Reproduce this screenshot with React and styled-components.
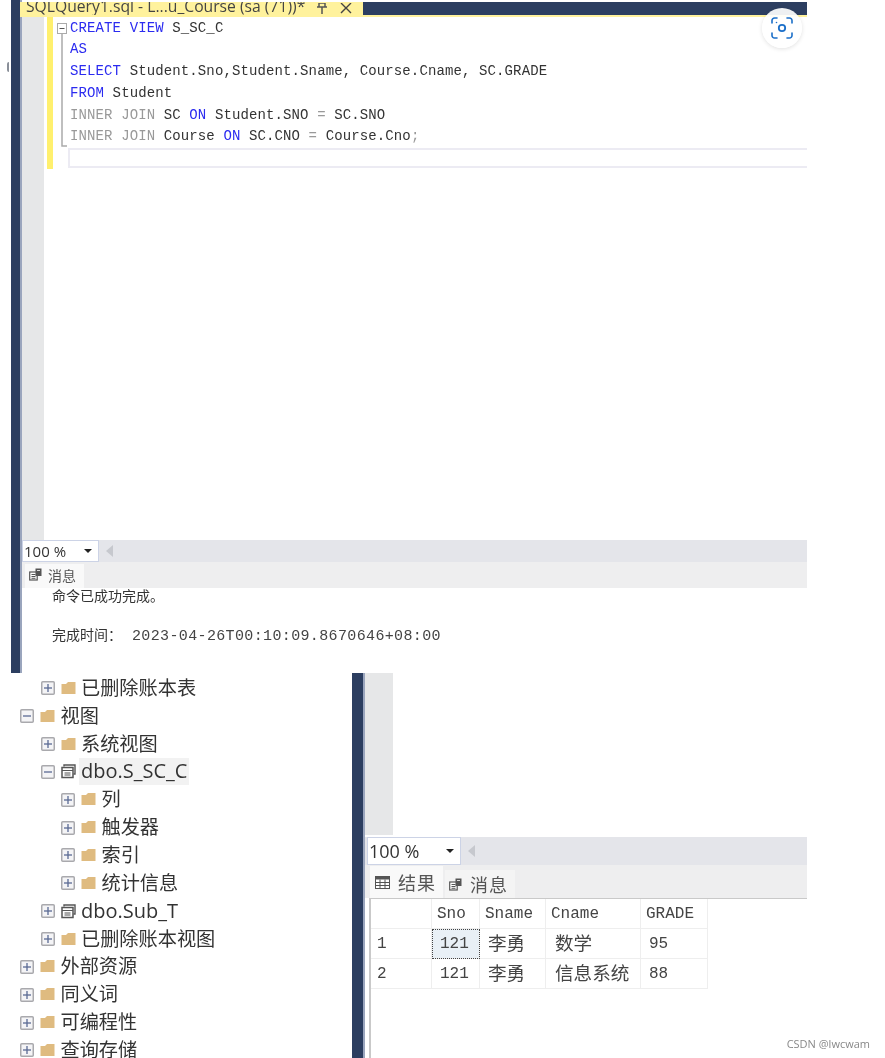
import styled, { createGlobalStyle } from 'styled-components';

const GlobalStyle = createGlobalStyle`
  html, body {
    margin: 0;
    padding: 0;
    background: #fff;
  }
`;

const CJK = '"Noto Sans CJK SC", sans-serif';
const MONO = '"Liberation Mono", "Noto Sans CJK SC", monospace';
const RAIL = '#2c3e60';

const Page = styled.div`
  position: relative;
  width: 885px;
  height: 1058px;
  overflow: hidden;
  background: #fff;
  font-family: ${CJK};
  color: #333;
  filter: blur(0.35px);
`;

const EditorWindow = styled.section`
  display: flex;
  width: 797px;
  height: 673px;
  margin-left: 10px;
`;

const Rail = styled.div`
  flex: none;
  width: ${(p) => p.$width}px;
  margin-left: ${(p) => p.$left}px;
  background: ${RAIL};
  border-right: 2px solid #9aa5bd;
`;

const Main = styled.div`
  flex: 1;
  min-width: 0;
  display: flex;
  flex-direction: column;
`;

const TitleStrip = styled.div`
  display: flex;
  height: 13px;
  margin: 2px 0 0 -2px;
  background: ${RAIL};
`;

const DocTab = styled.div`
  display: flex;
  align-items: flex-end;
  width: 343px;
  padding-left: 6px;
  box-sizing: border-box;
  overflow: hidden;
  background: #fff29d;
`;

const DocTitle = styled.span`
  font: 15.7px/20px "Open Sans", sans-serif;
  color: #444;
  white-space: nowrap;
  width: 288px;
  margin-bottom: -1px;
`;

const TabGlyph = styled.svg`
  flex: none;
  margin-left: ${(p) => p.$left}px;
  margin-bottom: 1px;
`;

const YellowRule = styled.div`
  height: 2px;
  margin-left: -2px;
  background: #fff29d;
`;

const CodeArea = styled.div`
  display: flex;
  height: 523px;
`;

const Gutter = styled.div`
  flex: none;
  width: 22px;
  background: #e6e7e8;
`;

const ChangeBar = styled.div`
  flex: none;
  width: 6px;
  height: 152px;
  margin-left: 3px;
  background: #fff06e;
`;

const FoldGlyph = styled.svg`
  flex: none;
  margin: 6px 0 0 4px;
`;

const CodeColumn = styled.div`
  flex: 1;
  min-width: 0;
  padding-top: 0.5px;
`;

const CodeLine = styled.div`
  height: 21.8px;
  padding-left: 2px;
  font: 14px/21.8px ${MONO};
  letter-spacing: 0.12px;
  white-space: pre;
  color: #333;
`;

const Keyword = styled.span`
  color: ${(p) => (p.$muted ? '#999' : '#2b2bf0')};
`;

const CurrentLine = styled.div`
  height: 16px;
  border: 2px solid #ecebf3;
  border-right: none;
`;

const ZoomBar = styled.div`
  flex: none;
  display: flex;
  align-items: center;
  height: ${(p) => p.$height}px;
  padding-left: ${(p) => p.$inset}px;
  background: #e4e5ea;
`;

const ZoomSelect = styled.div`
  display: flex;
  align-items: center;
  justify-content: space-between;
  box-sizing: border-box;
  width: ${(p) => p.$width}px;
  height: 100%;
  padding: 0 6px 0 1px;
  background: #fff;
  border: 1px solid #ccd3e6;
  font: ${(p) => p.$size}px "Open Sans", sans-serif;
  color: #333;
`;

const Caret = styled.span`
  width: 0;
  height: 0;
  border-left: 4px solid transparent;
  border-right: 4px solid transparent;
  border-top: 4px solid #222;
`;

const ScrollArrow = styled.span`
  width: 0;
  height: 0;
  margin-left: 7px;
  border-top: 6px solid transparent;
  border-bottom: 6px solid transparent;
  border-right: 7px solid #c6c8ce;
`;

const TabStrip = styled.div`
  flex: none;
  display: flex;
  align-items: flex-end;
  gap: 2px;
  height: ${(p) => p.$height}px;
  padding-left: ${(p) => p.$inset}px;
  background: #eeeeef;
`;

const ResultTab = styled.div`
  display: flex;
  align-items: center;
  gap: ${(p) => p.$gap}px;
  box-sizing: border-box;
  height: ${(p) => p.$height}px;
  padding-left: ${(p) => p.$pad}px;
  padding-bottom: ${(p) => p.$lift || 0}px;
  width: ${(p) => p.$width}px;
  background: ${(p) => (p.$active ? '#f9f9f9' : '#f4f4f4')};
  font: ${(p) => p.$size}px/1 ${CJK};
  letter-spacing: ${(p) => p.$spacing || 0}px;
  color: #555;
`;

const Output = styled.div`
  padding-left: 30px;
  font-size: 14px;
  color: #333;
`;

const OutputLine = styled.div`
  height: 19px;
  margin-bottom: ${(p) => p.$after || 0}px;
  line-height: 15px;
  white-space: pre;
`;

const Stamp = styled.span`
  margin-left: 10px;
  font: 15px ${MONO};
  letter-spacing: 0.36px;
  color: #444;
`;

const EdgeMark = styled.div`
  position: absolute;
  left: 7px;
  top: 62px;
  width: 2px;
  height: 10px;
  border-radius: 2px 0 0 2px;
  background: #8a8f99;
`;

const BottomRow = styled.section`
  display: flex;
  height: 385px;
`;

const TreePane = styled.div`
  flex: none;
  width: 351px;
  padding-top: 1.5px;
  box-sizing: border-box;
`;

const TreeRow = styled.div`
  display: flex;
  align-items: center;
  height: 27.85px;
  padding-left: ${(p) => 20 + p.$level * 20.5}px;
`;

const Expander = styled.svg`
  flex: none;
  margin-right: 6px;
`;

const NodeIcon = styled.svg`
  flex: none;
  margin-right: 3.5px;
`;

const NodeLabel = styled.span`
  padding: 0 2px;
  height: 27px;
  line-height: 26px;
  font-size: ${(p) => (p.$latin ? 20 : 19.2)}px;
  font-family: "Open Sans", ${CJK};
  white-space: nowrap;
  color: #333;
  background: ${(p) => (p.$selected ? '#f2f2f2' : 'transparent')};
`;

const ResultsPane = styled.div`
  flex: none;
  display: flex;
  width: 456px;
`;

const ResultsGutter = styled.div`
  flex: none;
  width: 28px;
  height: 162px;
  margin-bottom: 2px;
  background: #e6e7e8;
`;

const GridFrame = styled.div`
  flex: 1;
  margin-left: 4px;
  border-left: 2px solid #c9c9c9;
  border-top: 1px solid #c9c9c9;
`;

const ResultGrid = styled.div`
  display: grid;
  grid-template-columns: 61px 48px 66px 95px 67px;
  grid-template-rows: 30px 30px 30px;
  width: 337px;
`;

const Cell = styled.div`
  display: flex;
  align-items: center;
  box-sizing: border-box;
  padding-left: ${(p) => p.$pad ?? 8}px;
  padding-bottom: ${(p) => (p.$cjk ? 4 : 0)}px;
  border-right: 1px solid #eeeeee;
  border-bottom: 1px solid #eeeeee;
  font: ${(p) => (p.$cjk ? 18.6 : 16)}px ${MONO};
  color: #444;
  background: ${(p) => (p.$focus ? '#e9f0f6' : '#fff')};
  outline: ${(p) => (p.$focus ? '1px dotted #444' : 'none')};
  outline-offset: -1px;
`;

const HeaderCell = styled(Cell)`
  padding-left: 5px;
  background: #fff;
`;

const LensButton = styled.div`
  position: absolute;
  left: 762px;
  top: 8px;
  display: flex;
  align-items: center;
  justify-content: center;
  width: 40px;
  height: 40px;
  border-radius: 50%;
  background: rgba(255, 255, 255, 0.92);
  box-shadow: 0 1px 4px rgba(0, 0, 0, 0.12);
`;

const Watermark = styled.div`
  position: absolute;
  right: 15px;
  bottom: 7px;
  font: 11px "Open Sans", sans-serif;
  color: #888;
`;

const tree = [
  { level: 1, sign: 'plus', icon: 'folder', label: '已删除账本表' },
  { level: 0, sign: 'minus', icon: 'folder', label: '视图' },
  { level: 1, sign: 'plus', icon: 'folder', label: '系统视图' },
  { level: 1, sign: 'minus', icon: 'view', label: 'dbo.S_SC_C', selected: true },
  { level: 2, sign: 'plus', icon: 'folder', label: '列' },
  { level: 2, sign: 'plus', icon: 'folder', label: '触发器' },
  { level: 2, sign: 'plus', icon: 'folder', label: '索引' },
  { level: 2, sign: 'plus', icon: 'folder', label: '统计信息' },
  { level: 1, sign: 'plus', icon: 'view', label: 'dbo.Sub_T' },
  { level: 1, sign: 'plus', icon: 'folder', label: '已删除账本视图' },
  { level: 0, sign: 'plus', icon: 'folder', label: '外部资源' },
  { level: 0, sign: 'plus', icon: 'folder', label: '同义词' },
  { level: 0, sign: 'plus', icon: 'folder', label: '可编程性' },
  { level: 0, sign: 'plus', icon: 'folder', label: '查询存储' },
];

const rows = [
  ['1', '121', '李勇', '数学', '95'],
  ['2', '121', '李勇', '信息系统', '88'],
];

function ExpanderIcon({ sign }) {
  return (
    <Expander width="14" height="14" viewBox="0 0 14 14">
      <rect x="0.75" y="0.75" width="12.5" height="12.5" rx="1" fill="#f4f4f6" stroke="#a9a9ad" strokeWidth="1.5" />
      <path d="M3 7h8" stroke="#5a6a94" strokeWidth="1.3" />
      {sign === 'plus' && <path d="M7 3v8" stroke="#5a6a94" strokeWidth="1.3" />}
    </Expander>
  );
}

function TreeIcon({ kind }) {
  if (kind === 'view') {
    return (
      <NodeIcon width="15" height="15" viewBox="0 0 15 15">
        <path d="M3 2.500V1h11v9h-1.500" fill="none" stroke="#555" strokeWidth="1.4" />
        <rect x="1" y="3.500" width="11" height="10" fill="#fff" stroke="#555" strokeWidth="1.5" />
        <path d="M1 6.500h11M3.500 9h6M3.500 11h6" stroke="#555" strokeWidth="1.2" />
      </NodeIcon>
    );
  }
  return (
    <NodeIcon width="15" height="15" viewBox="0 0 15 15">
      <path d="M0.500 3 L5 3 L7 1 L14.500 1 L14.500 13 L0.500 13 Z" fill="#dfbb80" />
    </NodeIcon>
  );
}

function MessageIcon() {
  return (
    <svg width="13" height="13" viewBox="0 0 13 13">
      <rect x="0.7" y="4" width="7.5" height="8" fill="#fff" stroke="#555" strokeWidth="1.2" />
      <path d="M2.500 6.500h4M2.500 8.500h4M2.500 10.300h4" stroke="#555" />
      <rect x="6.500" y="0.500" width="6" height="7.500" fill="#555" />
      <path d="M8 2.500h3" stroke="#ddd" />
    </svg>
  );
}

function TableIcon() {
  return (
    <svg width="15" height="13" viewBox="0 0 15 13">
      <rect x="0.500" y="0.500" width="14" height="12" fill="#fff" stroke="#555" />
      <rect x="0.500" y="0.500" width="14" height="3" fill="#555" />
      <path d="M0.500 6.500h14M0.500 9.500h14M5 3.500v9M10 3.500v9" stroke="#555" />
    </svg>
  );
}

function App() {
  return (
    <Page>
      <GlobalStyle />
      <EdgeMark />
      <EditorWindow>
        <Rail $width={9} $left={1} />
        <Main>
          <TitleStrip>
            <DocTab>
              <DocTitle>SQLQuery1.sql - L...u_Course (sa (71))*</DocTitle>
              <TabGlyph $left={1} width="14" height="11" viewBox="0 0 14 11">
                <path d="M2 4h10M7 4v7M4 0h6v4H4z" fill="none" stroke="#555" strokeWidth="1.5" />
              </TabGlyph>
              <TabGlyph $left={11} width="12" height="11" viewBox="0 0 12 11">
                <path d="M1 0l10 10M11 0L1 10" fill="none" stroke="#444" strokeWidth="1.4" />
              </TabGlyph>
            </DocTab>
          </TitleStrip>
          <YellowRule />
          <CodeArea>
            <Gutter />
            <ChangeBar />
            <FoldGlyph width="11" height="125" viewBox="0 0 11 125">
              <rect x="0.500" y="0.500" width="9" height="10" fill="#fff" stroke="#aaa" />
              <path d="M2.500 5.500h5" stroke="#555" />
              <path d="M5 11v112h5" fill="none" stroke="#aaa" strokeWidth="1.5" />
            </FoldGlyph>
            <CodeColumn>
              <CodeLine><Keyword>CREATE VIEW</Keyword> S_SC_C</CodeLine>
              <CodeLine><Keyword>AS</Keyword></CodeLine>
              <CodeLine><Keyword>SELECT</Keyword> Student.Sno,Student.Sname, Course.Cname, SC.GRADE</CodeLine>
              <CodeLine><Keyword>FROM</Keyword> Student</CodeLine>
              <CodeLine><Keyword $muted>INNER JOIN</Keyword> SC <Keyword>ON</Keyword> Student.SNO <Keyword $muted>=</Keyword> SC.SNO</CodeLine>
              <CodeLine><Keyword $muted>INNER JOIN</Keyword> Course <Keyword>ON</Keyword> SC.CNO <Keyword $muted>=</Keyword> Course.Cno<Keyword $muted>;</Keyword></CodeLine>
              <CurrentLine />
            </CodeColumn>
          </CodeArea>
          <ZoomBar $height={22} $inset={0}>
            <ZoomSelect $width={77} $size={15}>100 %<Caret /></ZoomSelect>
            <ScrollArrow />
          </ZoomBar>
          <TabStrip $height={26} $inset={3}>
            <ResultTab $active $width={59} $height={24} $pad={4} $gap={6} $size={14} $lift={3}>
              <MessageIcon />消息
            </ResultTab>
          </TabStrip>
          <Output>
            <OutputLine $after={20}>命令已成功完成。</OutputLine>
            <OutputLine>完成时间：<Stamp>2023-04-26T00:10:09.8670646+08:00</Stamp></OutputLine>
          </Output>
        </Main>
      </EditorWindow>
      <BottomRow>
        <TreePane>
          {tree.map((node) => (
            <TreeRow key={node.label} $level={node.level}>
              <ExpanderIcon sign={node.sign} />
              <TreeIcon kind={node.icon} />
              <NodeLabel $selected={node.selected} $latin={node.icon === 'view'}>{node.label}</NodeLabel>
            </TreeRow>
          ))}
        </TreePane>
        <ResultsPane>
          <Rail $width={11} $left={1} />
          <Main>
            <ResultsGutter />
            <ZoomBar $height={28} $inset={2}>
              <ZoomSelect $width={94} $size={18}>100 %<Caret /></ZoomSelect>
              <ScrollArrow />
            </ZoomBar>
            <TabStrip $height={33} $inset={5}>
              <ResultTab $active $width={73} $height={32} $pad={5} $gap={8} $size={18} $spacing={1}>
                <TableIcon />结果
              </ResultTab>
              <ResultTab $width={70} $height={28} $pad={4} $gap={8} $size={18} $spacing={1}>
                <MessageIcon />消息
              </ResultTab>
            </TabStrip>
            <GridFrame>
              <ResultGrid>
                <HeaderCell />
                <HeaderCell>Sno</HeaderCell>
                <HeaderCell>Sname</HeaderCell>
                <HeaderCell>Cname</HeaderCell>
                <HeaderCell>GRADE</HeaderCell>
                {rows.map((row, r) =>
                  row.map((value, c) => (
                    <Cell
                      key={`${r}-${c}`}
                      $focus={r === 0 && c === 1}
                      $cjk={c === 2 || c === 3}
                      $pad={c === 3 ? 9 : c === 0 ? 6 : 8}
                    >
                      {value}
                    </Cell>
                  ))
                )}
              </ResultGrid>
            </GridFrame>
          </Main>
        </ResultsPane>
      </BottomRow>
      <LensButton>
        <svg width="22" height="22" viewBox="0 0 22 22" fill="none" stroke="#1b6fc9" strokeWidth="1.6" strokeLinecap="round">
          <path d="M1 6V3.500A2.500 2.500 0 0 1 3.500 1H6M16 1h2.500A2.500 2.500 0 0 1 21 3.500V6M21 16v2.500a2.500 2.500 0 0 1-2.500 2.500H16M6 21H3.500A2.500 2.500 0 0 1 1 18.500V16" />
          <circle cx="11" cy="11" r="3.2" strokeWidth="1.8" />
          <circle cx="5.500" cy="5.500" r="0.8" fill="#1b6fc9" stroke="none" />
        </svg>
      </LensButton>
      <Watermark>CSDN @lwcwam</Watermark>
    </Page>
  );
}

export default App;
